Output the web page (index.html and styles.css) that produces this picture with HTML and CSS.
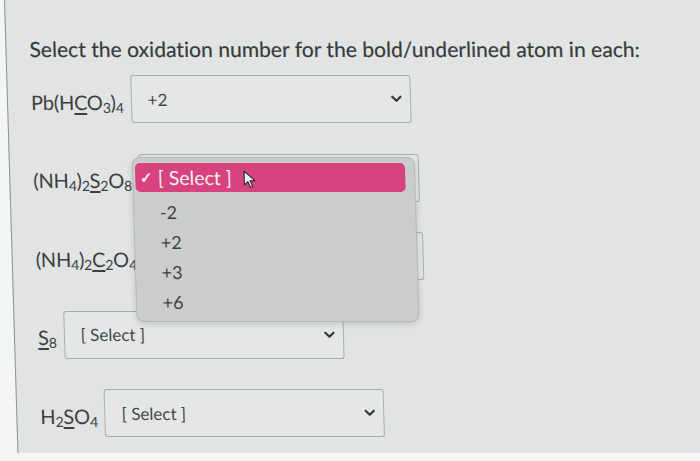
FILE: index.html
```html
<!DOCTYPE html>
<html lang="en">
<head>
    <meta charset="UTF-8">
    <title>Oxidation Numbers</title>
    <link rel="stylesheet" href="styles.css">
</head>
<body>
    <div class="sheet">
        <h1 class="question">Select the oxidation number for the bold/underlined atom in each:</h1>

        <div class="answers">
            <div class="answer-row">
                <span class="formula">Pb(H<u>C</u>O<sub>3</sub>)<sub>4</sub></span>
                <div class="picker">
                    <span class="picker-value">+2</span>
                    <svg class="chevron" viewBox="0 0 12 8"><path d="M1.5 1.5 L6 6 L10.5 1.5"/></svg>
                </div>
            </div>

            <div class="answer-row">
                <span class="formula">(NH<sub>4</sub>)<sub>2</sub><u>S</u><sub>2</sub>O<sub>8</sub></span>
                <div class="picker picker-open">
                    <span class="picker-value">[ Select ]</span>
                    <svg class="chevron" viewBox="0 0 12 8"><path d="M1.5 1.5 L6 6 L10.5 1.5"/></svg>

                    <ul class="menu">
                        <li class="menu-item is-active">
                            <span class="tick">&#10003;</span>[ Select ]
                            <svg class="cursor" viewBox="0 0 14 20"><path d="M1 1 L1 16 L4.8 12.4 L7.6 18.6 L10 17.5 L7.3 11.4 L12.4 11.2 Z"/></svg>
                        </li>
                        <li class="menu-item">-2</li>
                        <li class="menu-item">+2</li>
                        <li class="menu-item">+3</li>
                        <li class="menu-item">+6</li>
                    </ul>
                </div>
            </div>

            <div class="answer-row">
                <span class="formula">(NH<sub>4</sub>)<sub>2</sub><u>C</u><sub>2</sub>O<sub>4</sub></span>
                <div class="picker">
                    <span class="picker-value">[ Select ]</span>
                    <svg class="chevron" viewBox="0 0 12 8"><path d="M1.5 1.5 L6 6 L10.5 1.5"/></svg>
                </div>
            </div>

            <div class="answer-row">
                <span class="formula"><u>S</u><sub>8</sub></span>
                <div class="picker">
                    <span class="picker-value">[ Select ]</span>
                    <svg class="chevron" viewBox="0 0 12 8"><path d="M1.5 1.5 L6 6 L10.5 1.5"/></svg>
                </div>
            </div>

            <div class="answer-row">
                <span class="formula">H<sub>2</sub><u>S</u>O<sub>4</sub></span>
                <div class="picker">
                    <span class="picker-value">[ Select ]</span>
                    <svg class="chevron" viewBox="0 0 12 8"><path d="M1.5 1.5 L6 6 L10.5 1.5"/></svg>
                </div>
            </div>
        </div>
    </div>
</body>
</html>
```

FILE: styles.css
```css
* {
    margin: 0;
    padding: 0;
    box-sizing: border-box;
}

body {
    background: #f4f5f5;
    font-family: 'Lato', 'Liberation Sans', sans-serif;
    color: #3b3e40;
    overflow: hidden;
}

.sheet {
    height: 453px;
    margin-left: 4px;
    padding: 36px 0 0 23px;
    background: #e1e4e3;
    border-left: 1px solid #8e9292;
    transform: skewX(1.7deg);
    transform-origin: top left;
}

.question {
    font-size: 21px;
    font-weight: 400;
    color: #383b3d;
    letter-spacing: 0.05px;
    -webkit-text-stroke: 0.2px #383b3d;
}

.answers {
    display: flex;
    flex-direction: column;
    gap: 30.5px;
    margin-top: 14px;
}

.answer-row {
    display: flex;
    align-items: center;
    gap: 7px;
    height: 48px;
}

.formula {
    font-size: 20px;
    color: #3d4042;
    white-space: nowrap;
    padding-top: 5px;
    letter-spacing: -0.2px;
}

.formula sub {
    font-size: 14px;
    vertical-align: -3px;
    line-height: 0;
}

.formula u {
    text-decoration-thickness: 1.5px;
    text-underline-offset: 3px;
}

.picker {
    position: relative;
    flex-shrink: 0;
    width: 280px;
    height: 48px;
    display: flex;
    align-items: center;
    justify-content: space-between;
    padding: 0 8px 0 16px;
    background: #e5e7e7;
    border: 1px solid #a9aeae;
    border-radius: 3px;
}

.picker-value {
    font-size: 17px;
    color: #44474a;
}

.chevron {
    width: 11px;
    height: 8px;
    fill: none;
    stroke: #35383a;
    stroke-width: 2.4;
    stroke-linecap: round;
    stroke-linejoin: round;
}

.menu {
    position: absolute;
    left: -8px;
    top: 2px;
    width: 283px;
    height: 165px;
    padding: 5px 9px 0 2px;
    list-style: none;
    background: #cbcdcd;
    border: 1px solid #b6b9b9;
    border-radius: 8px;
    box-shadow: 0 2px 6px rgba(0, 0, 0, 0.15);
    z-index: 2;
}

.menu-item {
    height: 30px;
    display: flex;
    align-items: center;
    padding-left: 24px;
    font-size: 18px;
    color: #3f4244;
}

.menu-item.is-active {
    position: relative;
    height: 29px;
    margin-bottom: 5px;
    padding-left: 5px;
    background: #d6437d;
    border-radius: 5px;
    color: #fbeef3;
    font-size: 19.5px;
}

.tick {
    font-size: 15px;
    font-weight: 700;
    margin-right: 5px;
}

.cursor {
    position: absolute;
    left: 108px;
    top: 7px;
    width: 13px;
    height: 19px;
    fill: #f3f1f2;
    stroke: #2b2b2b;
    stroke-width: 1.3;
    stroke-linejoin: round;
}
```
